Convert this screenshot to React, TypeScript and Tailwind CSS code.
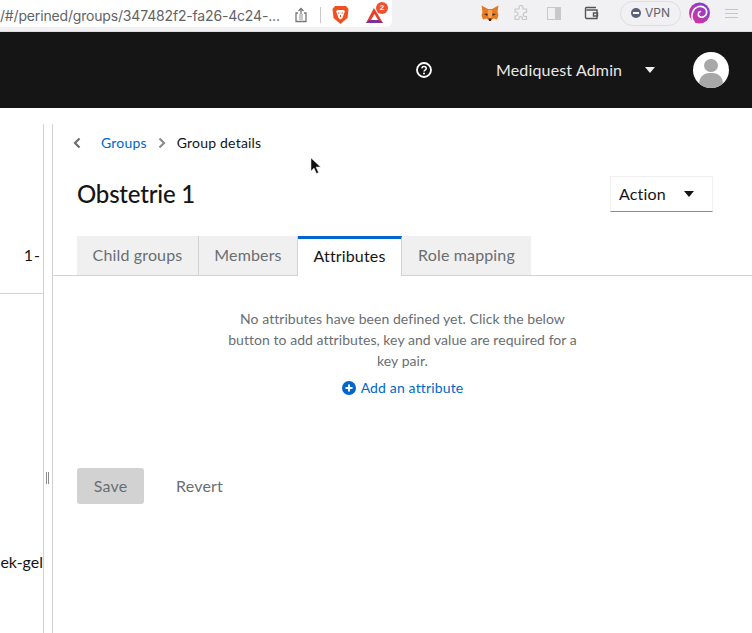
import React from 'react';

const Fox = () => (
  <svg width="18" height="17" viewBox="0 0 18 17">
    <path d="M0.500 0.500L7 4h4l6.500-3.500-1 6 1 3.500-1.500 4.500-3.500-1-2 1.500H7.500l-2-1.500-3.500 1L.5 10.500l1-3.500z" fill="#e8791f" />
    <path d="M7 5h4l.5 5-1.500 3H8l-1.500-3z" fill="#f6a25a" />
    <path d="M3 9l3.500-.5 0 2.500zM15 9l-3.500-.5 0 2.500z" fill="#3c2a1c" />
    <path d="M7.500 13.500h3l-.5 2.500H8z" fill="#2b2118" />
  </svg>
);

const BrowserBar = () => (
  <div className="h-8 bg-[#f1f0f3] flex items-center border-b border-[#dddcdf] shrink-0">
    <div className="w-[392px] h-[27px] mb-[5px] bg-white rounded-br-md flex items-center">
      <span className="text-[14px] text-[#5f6368] whitespace-nowrap w-[280px] pt-1 font-['Inter',sans-serif] tracking-[-0.17px]">/#/perined/groups/347482f2-fa26-4c24-...</span>
      <svg className="ml-[14px] mt-1" width="14" height="16" viewBox="0 0 14 16" fill="none" stroke="#777" strokeWidth="1.300">
        <path d="M4 6H2v8.500h10V6h-2" />
        <path d="M7 10V1.500M4.500 4L7 1.500 9.500 4" />
        <path d="M5 7h4v6H5z" fill="#c9c9c9" stroke="none" />
      </svg>
      <div className="w-px h-4 bg-[#c9c9c9] ml-[12px] mt-1" />
      <svg className="ml-[11px] mt-1" width="17" height="20" viewBox="0 0 17 20">
        <path d="M3 1h11l2.500 3-1 9L8.500 19 1.500 13l-1-9z" fill="#f1501f" />
        <path d="M4 6l2-1h5l2 1-1.500 4-1 3-2 1.500-2-1.500-1-3z" fill="#fff" />
        <path d="M6 8h1.500M9.500 8H11M8.500 10v2" stroke="#f1501f" strokeWidth="1" />
      </svg>
      <div className="relative ml-[16px] mt-1 w-5 h-5">
        <svg width="19" height="18" viewBox="0 0 19 18" className="absolute left-0 top-[2px]">
          <path d="M9 1l9 15H1z" fill="#e8402c" />
          <path d="M1 16l3-3h10l4 3z" fill="#7a2f9c" />
          <path d="M9.500 7l3.500 6H6z" fill="#fff" />
        </svg>
        <span className="absolute left-[11px] top-[-3px] w-[12px] h-[12px] rounded-full bg-[#f2502b] text-white text-[8px] font-bold flex items-center justify-center font-['Liberation_Sans',sans-serif]">2</span>
      </div>
    </div>
    <div className="flex items-center ml-[89px] mb-[5px]">
      <Fox />
      <svg className="ml-[14px]" width="16" height="16" viewBox="0 0 16 16" fill="none" stroke="#c8c8c8" strokeWidth="1.200">
        <path d="M6 2.500a2 2 0 0 1 4 0V4h3.500v3.500h-1.200a1.800 1.800 0 0 0 0 4h1.200V14.500H9.500v-1a1.800 1.800 0 0 0-3.600 0v1H2V11h1a2 2 0 0 0 0-4H2V4h4z" />
      </svg>
      <div className="ml-[18px] w-[14px] h-[13px] border border-[#c8c8c8] flex justify-end">
        <div className="w-[5px] bg-[#c8c8c8]" />
      </div>
      <svg className="ml-[23px]" width="15" height="14" viewBox="0 0 15 14" fill="none" stroke="#555" strokeWidth="1.400">
        <path d="M12 1.500H2.500a1.200 1.200 0 0 0-1 1.200v8.600a1.200 1.200 0 0 0 1 1.200h10.500V4H2.500M9.500 7h4v3h-4z" />
      </svg>
      <div className="ml-[21px] w-[61px] h-[25px] rounded-full border border-[#dedde1] flex items-center justify-center gap-1">
        <div className="w-[10px] h-[10px] rounded-full bg-[#59607c] flex items-center justify-center">
          <div className="w-[6px] h-[2px] bg-white" />
        </div>
        <span className="text-[12px] text-[#5f6368] font-['Inter',sans-serif]">VPN</span>
      </div>
      <svg className="ml-[7px]" width="23" height="24" viewBox="0 0 23 24" fill="none">
        <defs>
          <linearGradient id="swirl" x1="0" y1="1" x2="1" y2="0">
            <stop offset="0" stopColor="#e0359a" />
            <stop offset="1" stopColor="#7b3fd4" />
          </linearGradient>
        </defs>
        <circle cx="11.500" cy="12" r="10.500" fill="url(#swirl)" />
        <path d="M6 21C2 16 4 7 11 5.500c5-1 8.500 3 7.500 7-.8 3-4.500 4.700-7 3-2-1.400-1.500-4.700 1-5" stroke="#fff" strokeWidth="1.600" strokeLinecap="round" />
      </svg>
      <div className="ml-[14px] w-[13px] flex flex-col gap-[3px]">
        <div className="h-px bg-[#c6c6c6]" />
        <div className="h-px bg-[#c6c6c6]" />
        <div className="h-px bg-[#c6c6c6]" />
      </div>
    </div>
  </div>
);

const AppHeader = () => (
  <div className="h-[76px] bg-[#151515] flex items-center justify-end shrink-0 pr-[23px] text-[#e8e8e8]">
    <svg width="16" height="16" viewBox="0 0 16 16" fill="none" className="mr-[64px]">
      <circle cx="8" cy="8" r="7" stroke="#fff" strokeWidth="1.800" />
      <path d="M5.800 6.300A2.200 2.200 0 0 1 8 4.500c1.300 0 2.200.8 2.200 1.900 0 1.700-2.200 1.600-2.200 3.200" stroke="#fff" strokeWidth="1.500" />
      <circle cx="8" cy="11.600" r="1" fill="#fff" />
    </svg>
    <span className="text-[16px] mr-[18px] w-[131px] whitespace-nowrap tracking-[0.15px]">Mediquest Admin</span>
    <svg width="10" height="6" viewBox="0 0 10 6" className="mr-[38px]"><path d="M0 0h10L5 6z" fill="#eee" /></svg>
    <div className="w-9 h-9 rounded-full bg-white overflow-hidden flex flex-col items-center">
      <div className="w-[14px] h-[14px] rounded-full bg-[#a8a8a8] mt-[7px]" />
      <div className="w-[24px] h-[16px] rounded-t-[10px] bg-[#a8a8a8] mt-[1px]" />
    </div>
  </div>
);

const tabs = [
  { label: 'Child groups', cls: 'w-[122px]' },
  { label: 'Members', cls: 'w-[99px]' },
  { label: 'Attributes', cls: 'w-[104px]' },
  { label: 'Role mapping', cls: 'w-[129px]' },
];

const TabBar = () => (
  <div className="flex pl-[24px] h-[40px] border-b border-[#d2d2d2]">
    {tabs.map((t) => {
      const active = t.label === 'Attributes';
      return (
        <div
          key={t.label}
          className={
            active
              ? `${t.cls} h-[40px] bg-white border-t-[3px] border-t-[#06c] border-r border-r-[#d2d2d2] flex items-center justify-center text-[#151515] text-[16px] tracking-[0.15px] pb-[3px]`
              : `${t.cls} h-[39px] bg-[#f0f0f0] border-r border-[#d2d2d2] last:border-r-0 flex items-center justify-center text-[#6a6e73] text-[16px] tracking-[0.15px] pb-[1px]`
          }
        >
          {t.label}
        </div>
      );
    })}
  </div>
);

const Sidebar = () => (
  <div className="w-[44px] shrink-0 border-r border-[#d2d2d2] mt-[16px] flex flex-col text-[#151515] text-[16px]">
    <div className="h-[170px] border-b border-[#d2d2d2] flex items-start justify-end pr-[3px] pt-[119px] [word-spacing:-3px]">1 -</div>
    <div className="mt-[256px] whitespace-nowrap flex justify-end">ek-gel</div>
  </div>
);

export default function App() {
  return (
    <div className="w-[752px] h-[633px] bg-white overflow-hidden flex flex-col relative font-['Lato',sans-serif]">
      <BrowserBar />
      <AppHeader />
      <div className="flex flex-1 min-h-0">
        <Sidebar />
        <div className="w-2 shrink-0 relative">
          <div className="absolute left-[2px] top-[364px] w-[3px] h-[12px] border-x border-[#8a8a8a]" />
        </div>
        <div className="flex-1 border-l border-[#d2d2d2] mt-[16px]">
          <div className="flex items-center pl-[20px] pt-[9px] text-[14px] tracking-[0.2px] h-[28px]">
            <svg width="8" height="12" viewBox="0 0 8 12" fill="none" stroke="#6a6e73" strokeWidth="2.200"><path d="M6.500 1.500L2 6l4.500 4.500" /></svg>
            <span className="text-[#06c] ml-[20px]">Groups</span>
            <svg className="ml-[11px]" width="8" height="12" viewBox="0 0 8 12" fill="none" stroke="#8a8d90" strokeWidth="2.200"><path d="M1.500 1.500L6 6l-4.500 4.500" /></svg>
            <span className="text-[#151515] ml-[11px]">Group details</span>
          </div>
          <div className="flex items-center justify-between pl-[24px] pr-[39px] mt-[18px] h-[48px]">
            <h1 className="text-[24px] text-[#151515] font-medium tracking-[-0.2px]">Obstetrie 1</h1>
            <div className="w-[103px] h-[36px] border border-[#f0f0f0] border-b-[#8a8d90] flex items-center justify-between pl-[8px] pr-[18px] text-[16px] tracking-[0.15px] text-[#151515]">
              Action
              <svg width="10" height="6" viewBox="0 0 10 6"><path d="M0 0h10L5 6z" fill="#151515" /></svg>
            </div>
          </div>
          <div className="mt-[18px]"><TabBar /></div>
          <div className="flex flex-col items-center mt-[32px]">
            <p className="w-[360px] text-center text-[14px] tracking-[0.05px] leading-[21px] text-[#6a6e73]">
              No attributes have been defined yet. Click the below button to add attributes, key and value are required for a key pair.
            </p>
            <div className="flex items-center gap-[5px] mt-[6px] text-[14px] tracking-[0.15px] text-[#06c]">
              <svg width="14" height="14" viewBox="0 0 14 14">
                <circle cx="7" cy="7" r="7" fill="#06c" />
                <path d="M7 3.500v7M3.500 7h7" stroke="#fff" strokeWidth="2" />
              </svg>
              Add an attribute
            </div>
          </div>
          <div className="flex items-center pl-[24px] mt-[70px]">
            <div className="w-[67px] h-[36px] rounded-[3px] bg-[#d2d2d2] text-[#6a6e73] text-[16px] tracking-[0.2px] flex items-center justify-center">Save</div>
            <span className="ml-[32px] text-[16px] tracking-[0.2px] text-[#6a6e73]">Revert</span>
          </div>
        </div>
      </div>
      <svg className="absolute left-[310px] top-[157px]" width="12" height="18" viewBox="0 0 12 18">
        <path d="M1 1v13l3-3 2.500 5.500 2-1L6 10h4.500z" fill="#111" stroke="#ddd" strokeWidth="0.500" />
      </svg>
    </div>
  );
}
